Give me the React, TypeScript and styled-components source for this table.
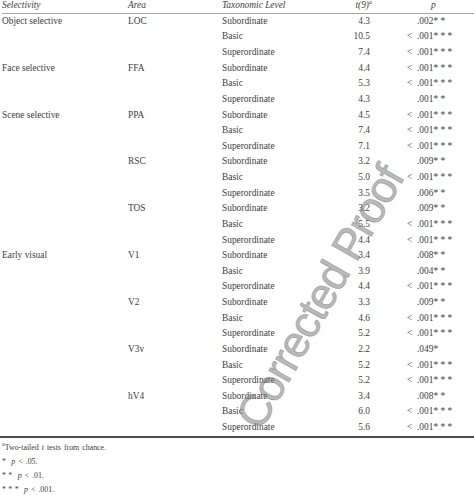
import styled, { createGlobalStyle } from "styled-components";

const GlobalStyle = createGlobalStyle`
    html, body {
        margin: 0;
        padding: 0;
        background: #ffffff;
    }
    body {
        font-family: "Liberation Serif", "DejaVu Serif", serif;
        color: #3d3d3d;
    }
`;

const Page = styled.div`
    position: relative;
    width: 474px;
    height: 495px;
    overflow: hidden;
    background: #fff;
`;

const Table = styled.div`
    display: grid;
    grid-template-columns: 126px 94px 84px 67px 1fr;
    padding-left: 2px;
    font-size: 9.4px;
`;

const HeadCell = styled.div<{ $align?: "left" | "right"; $pad?: number }>`
    height: 12.8px;
    line-height: 10px;
    font-style: italic;
    border-bottom: 1.6px solid #a4a4a4;
    text-align: ${p => p.$align ?? "left"};
    padding-left: ${p => p.$pad ?? 0}px;
    padding-right: ${p => (p.$align === "right" ? 1 : 0)}px;
    white-space: nowrap;
`;

const Sup = styled.sup`
    font-size: 6px;
    line-height: 0;
    vertical-align: 4px;
`;

const Cell = styled.div<{ $align?: "left" | "right"; $pad?: number }>`
    height: 15.64px;
    line-height: 15.64px;
    text-align: ${p => p.$align ?? "left"};
    padding-left: ${p => p.$pad ?? 0}px;
    padding-right: ${p => (p.$align === "right" ? 3 : 0)}px;
    white-space: nowrap;
`;

const Lt = styled.span`
    display: inline-block;
    width: 10px;
`;

const Stars = styled.span`
    letter-spacing: 2.4px;
`;

const BottomRule = styled.div`
    height: 0;
    border-top: 2px solid #4c4c4c;
`;

const Notes = styled.div`
    padding: 3px 0 0 2px;
    font-size: 7.9px;
`;

const Note = styled.div`
    height: 14px;
    line-height: 14px;
    white-space: nowrap;
    word-spacing: 1px;
`;

const Ital = styled.i``;

const Watermark = styled.div`
    position: absolute;
    left: 320px;
    top: 297px;
    transform: translate(-50%, -50%) rotate(-60.5deg);
    font-family: "Liberation Sans", Arial, sans-serif;
    font-size: 44px;
    letter-spacing: -1.2px;
    color: rgba(125, 125, 125, 0.55);
    -webkit-text-stroke: 0.8px rgba(125, 125, 125, 0.55);
    white-space: nowrap;
    pointer-events: none;
`;

type Level = { t: string; p: string };

interface IArea {
    selectivity?: string;
    area: string;
    rows: [Level, Level, Level];
}

const levels = ["Subordinate", "Basic", "Superordinate"];

const data: IArea[] = [
    { selectivity: "Object selective", area: "LOC", rows: [{ t: "4.3", p: ".002**" }, { t: "10.5", p: "<.001***" }, { t: "7.4", p: "<.001***" }] },
    { selectivity: "Face selective", area: "FFA", rows: [{ t: "4.4", p: "<.001***" }, { t: "5.3", p: "<.001***" }, { t: "4.3", p: ".001**" }] },
    { selectivity: "Scene selective", area: "PPA", rows: [{ t: "4.5", p: "<.001***" }, { t: "7.4", p: "<.001***" }, { t: "7.1", p: "<.001***" }] },
    { area: "RSC", rows: [{ t: "3.2", p: ".009**" }, { t: "5.0", p: "<.001***" }, { t: "3.5", p: ".006**" }] },
    { area: "TOS", rows: [{ t: "3.2", p: ".009**" }, { t: "5.5", p: "<.001***" }, { t: "4.4", p: "<.001***" }] },
    { selectivity: "Early visual", area: "V1", rows: [{ t: "3.4", p: ".008**" }, { t: "3.9", p: ".004**" }, { t: "4.4", p: "<.001***" }] },
    { area: "V2", rows: [{ t: "3.3", p: ".009**" }, { t: "4.6", p: "<.001***" }, { t: "5.2", p: "<.001***" }] },
    { area: "V3v", rows: [{ t: "2.2", p: ".049*" }, { t: "5.2", p: "<.001***" }, { t: "5.2", p: "<.001***" }] },
    { area: "hV4", rows: [{ t: "3.4", p: ".008**" }, { t: "6.0", p: "<.001***" }, { t: "5.6", p: "<.001***" }] },
];

function PValue({ value }: { value: string }) {
    const lt = value.startsWith("<");
    const body = lt ? value.slice(1) : value;
    const num = body.replace(/\*+$/, "");
    const stars = body.slice(num.length);
    return (
        <>
            <Lt>{lt ? "<" : ""}</Lt>
            {num}
            <Stars>{stars}</Stars>
        </>
    );
}

function App() {
    return (
        <Page>
            <GlobalStyle />
            <Table>
                <HeadCell>Selectivity</HeadCell>
                <HeadCell>Area</HeadCell>
                <HeadCell>Taxonomic Level</HeadCell>
                <HeadCell $align="right">
                    t(9)<Sup>a</Sup>
                </HeadCell>
                <HeadCell $pad={58}>p</HeadCell>
                {data.map(group =>
                    group.rows.map((row, i) => (
                        <>
                            <Cell key={`${group.area}-s${i}`}>{i === 0 ? group.selectivity ?? "" : ""}</Cell>
                            <Cell key={`${group.area}-a${i}`}>{i === 0 ? group.area : ""}</Cell>
                            <Cell key={`${group.area}-l${i}`}>{levels[i]}</Cell>
                            <Cell key={`${group.area}-t${i}`} $align="right">{row.t}</Cell>
                            <Cell key={`${group.area}-p${i}`} $pad={34}>
                                <PValue value={row.p} />
                            </Cell>
                        </>
                    ))
                )}
            </Table>
            <BottomRule />
            <Notes>
                <Note>
                    <Sup>a</Sup>Two-tailed <Ital>t</Ital> tests from chance.
                </Note>
                <Note>
                    <Stars>*</Stars> <Ital>p</Ital> &lt; .05.
                </Note>
                <Note>
                    <Stars>**</Stars> <Ital>p</Ital> &lt; .01.
                </Note>
                <Note>
                    <Stars>***</Stars> <Ital>p</Ital> &lt; .001.
                </Note>
            </Notes>
            <Watermark>Corrected Proof</Watermark>
        </Page>
    );
}

export default App;
